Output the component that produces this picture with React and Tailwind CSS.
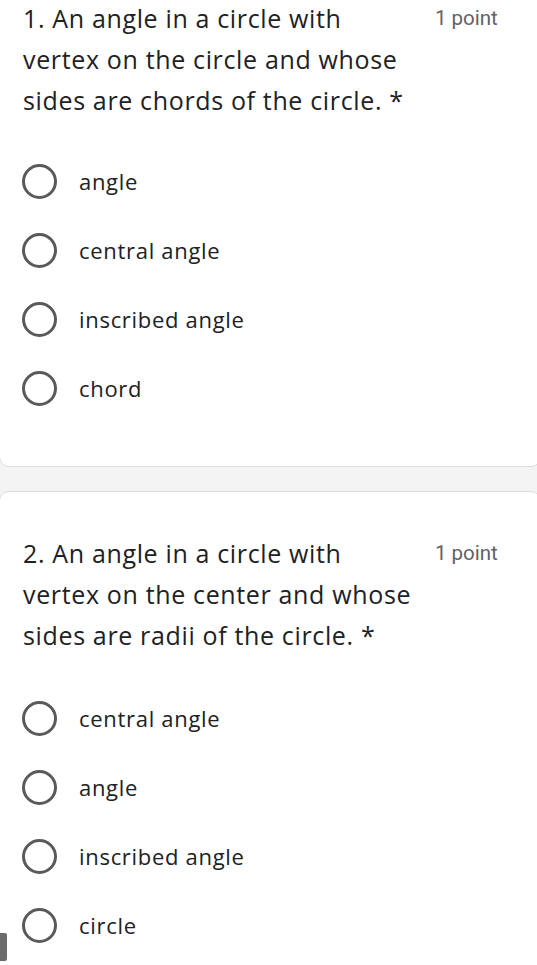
import React from "react";

const Radio = () => (
  <div className="w-[35px] h-[35px] rounded-full border-[3.5px] border-[#5a5a5a] shrink-0" />
);

const Option = ({ label }) => (
  <div className="flex items-center h-[69px] pl-[12px]">
    <Radio />
    <span
      className="ml-[22px] text-[22px] tracking-[0.7px] text-[#202124]"
      style={{ fontFamily: "'Open Sans', Roboto, sans-serif" }}
    >
      {label}
    </span>
  </div>
);

const Question = ({ lines, options, gap }) => (
  <div className="pl-[10px]">
    <div className="flex">
      <div
        className="pl-[13px] text-[25px] tracking-[0.65px] leading-[41px] text-[#202124] w-[413px]"
        style={{ fontFamily: "'Open Sans', Roboto, sans-serif" }}
      >
        {lines.map((l, i) => (
          <div key={i}>{l}</div>
        ))}
      </div>
      <div className="text-[20.5px] text-[#5f6368] leading-[41px] pl-[12px]">1 point</div>
    </div>
    <div style={{ marginTop: gap }}>
      {options.map((o) => (
        <Option key={o} label={o} />
      ))}
    </div>
  </div>
);

export default function App() {
  return (
    <div
      className="w-[537px] h-[965px] overflow-hidden bg-[#f4f4f4] relative"
      style={{ fontFamily: "Roboto, 'Noto Sans', sans-serif" }}
    >
      <div className="ml-[-1px] w-[542px] mt-[-44px] bg-white border border-[#dadce0] rounded-[10px] pt-[41px] pb-[43px]">
        <Question
          gap={26}
          lines={[
            "1. An angle in a circle with",
            "vertex on the circle and whose",
            "sides are chords of the circle. *",
          ]}
          options={["angle", "central angle", "inscribed angle", "chord"]}
        />
      </div>
      <div className="ml-[-1px] w-[542px] mt-[24px] bg-white border border-[#dadce0] rounded-[10px] pt-[41px] pb-[60px]">
        <Question
          gap={28}
          lines={[
            "2. An angle in a circle with",
            "vertex on the center and whose",
            "sides are radii of the circle. *",
          ]}
          options={["central angle", "angle", "inscribed angle", "circle"]}
        />
      </div>
      <div className="absolute left-0 top-[933px] w-[7px] h-[28px] bg-[#6b6b6b] rounded-r-[2px]" />
    </div>
  );
}
